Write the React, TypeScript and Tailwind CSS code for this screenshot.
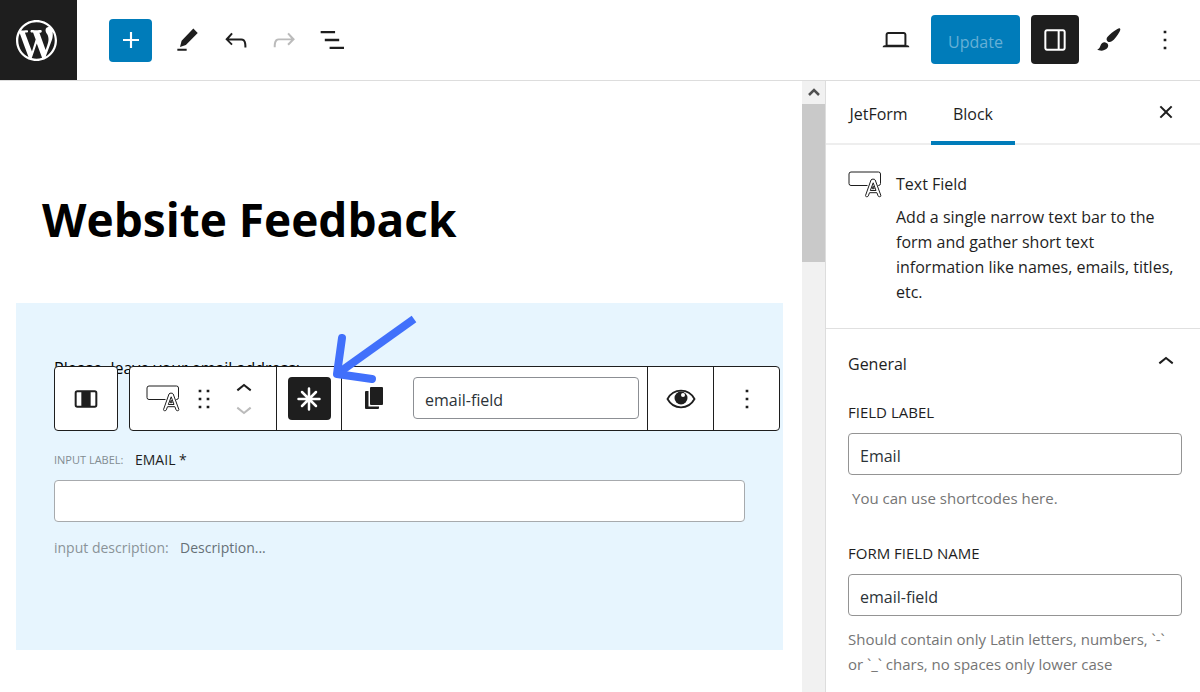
import React from 'react'

const paths = {
    plus: 'M11.2 12.8V18h1.6v-5.2H18v-1.6h-5.2V6h-1.6v5.2H6v1.6z',
    edit: 'm19.300 6.700-3.300-3.300-8.800 9.200-1.200 4.600 4.400-1.400zM11 18.500H4v1.500h7z',
    undo: 'M18.3 11.7c-.6-.6-1.4-.9-2.3-.9H6.7l2.9-3.3-1.1-1-4.5 5L8.5 16l1-1-2.7-2.7H16c.5 0 .9.2 1.3.5 1 1 1 3.4 1 4.5v.3h1.5v-.2c0-1.5 0-4.3-1.5-5.7z',
    redo: 'M15.6 6.5l-1.1 1 2.9 3.3H8c-.9 0-1.7.3-2.3.9-1.4 1.5-1.4 4.2-1.4 5.6v.2h1.5v-.3c0-1.1 0-3.5 1-4.5.3-.3.7-.5 1.3-.5h9.2L14.5 15l1.1 1.1 4.6-4.6-4.6-5z',
    listView: 'M14.300 5.200H3.500v1.800h10.800V5.200zm-4.100 11.800v1.800H21V17H10.200zm7.200-5.900H6.600v1.800h10.800v-1.800z',
    desktop: 'M20.5 16h-.7V8c0-1.1-.9-2-2-2H6.2c-1.1 0-2 .9-2 2v8h-.7c-.8 0-1.5.7-1.5 1.5h20c0-.8-.7-1.5-1.5-1.5zM5.7 8c0-.3.2-.5.5-.5h11.6c.3 0 .5.2.5.5v7.6H5.7V8z',
    drawer: 'M18 4H6c-1.1 0-2 .9-2 2v12c0 1.1.9 2 2 2h12c1.1 0 2-.9 2-2V6c0-1.1-.9-2-2-2zm-4 14.5H6c-.3 0-.5-.2-.5-.5V6c0-.3.2-.5.5-.5h8v13zm4.5-.5c0 .3-.2.5-.5.5h-2.5v-13H18c.3 0 .5.2.5.5v12z',
    brush: 'M20.2 3.4c.5.5.3 1.200-.2 2.200-1.600 3-4 6.200-5.900 7.400-1.200.8-2.400.7-3.300-.1-.8-.8-.8-2 0-3.100 1.600-2 4.800-4.700 7.500-6.100.9-.5 1.500-.7 1.900-.3zM9.300 13.800c1.200.2 2.100 1.200 2.100 2.400 0 2-2.100 3.700-5 3.800-1.400 0-2.600-.3-3.200-.8 1.300-.4 1.800-1.300 2.300-2.700.6-1.900 1.900-3 3.800-2.700z',
    more: 'M13 19h-2v-2h2v2zm0-6h-2v-2h2v2zm0-6h-2V5h2v2z',
    drag: 'M8 7h2V5H8v2zm0 6h2v-2H8v2zm0 6h2v-2H8v2zm6-14v2h2V5h-2zm0 8h2v-2h-2v2zm0 6h2v-2h-2v2z',
    up: 'M6.500 12.400L12 8l5.500 4.400-.9 1.200L12 10l-4.500 3.600-1-1.200z',
    down: 'M17.500 11.600L12 16l-5.500-4.400.9-1.200L12 14l4.500-3.600 1 1.200z',
    close: 'M12 13.060l3.712 3.713 1.061-1.060L13.061 12l3.712-3.712-1.060-1.060L12 10.938 8.288 7.227l-1.061 1.060L10.939 12l-3.712 3.712 1.060 1.061L12 13.061z',
    columns: 'M5.500 5.500h13a2 2 0 0 1 2 2v9a2 2 0 0 1-2 2h-13a2 2 0 0 1-2-2v-9a2 2 0 0 1 2-2zm-.5 1.900v9.200c0 .2.200.4.400.4h3.100V7H5.400c-.2 0-.4.200-.4.400zM15.500 7v10h3.100c.2 0 .4-.2.400-.4V7.400c0-.2-.2-.4-.4-.4z',
}

const Icon = ({name, className = 'size-8'}: { name: keyof typeof paths; className?: string }) => (
    <svg viewBox="0 0 24 24" fill="currentColor" className={className} aria-hidden="true">
        <path d={paths[name]}/>
    </svg>
)

const WordPressLogo = () => (
    <svg viewBox="0 0 20 20" fill="currentColor" className="size-[41px]" aria-hidden="true">
        <path
            d="M20 10c0-5.51-4.49-10-10-10C4.48 0 0 4.49 0 10c0 5.52 4.48 10 10 10 5.51 0 10-4.48 10-10zM7.78 15.37L4.37 6.22c.55-.02 1.17-.08 1.17-.08.5-.06.44-1.13-.06-1.11 0 0-1.45.11-2.37.11-.18 0-.37 0-.58-.01C4.12 2.69 6.87 1.11 10 1.11c2.33 0 4.45.87 6.05 2.34-.68-.11-1.65.39-1.65 1.58 0 .74.45 1.36.9 2.1.35.61.55 1.36.55 2.46 0 1.49-1.4 5-1.4 5l-3.03-8.37c.54-.02.82-.17.82-.17.5-.05.44-1.25-.06-1.22 0 0-1.44.12-2.38.12-.87 0-2.33-.12-2.33-.12-.5-.03-.56 1.2-.06 1.22l.92.08 1.26 3.41zM17.41 10c.24-.64.74-1.87.43-4.25.7 1.29 1.05 2.71 1.05 4.25 0 3.29-1.73 6.24-4.4 7.78.97-2.59 1.94-5.2 2.92-7.78zM6.1 18.09C3.12 16.65 1.11 13.53 1.11 10c0-1.3.23-2.48.72-3.59C3.25 10.3 4.67 14.2 6.1 18.09zm4.03-6.63l2.58 6.98c-.86.29-1.76.45-2.71.45-.79 0-1.57-.11-2.29-.33.81-2.38 1.62-4.74 2.42-7.1z"/>
    </svg>
)

const TextFieldIcon = () => (
    <svg viewBox="0 0 34 28" fill="none" stroke="currentColor" className="h-7 w-[34px] shrink-0" aria-hidden="true">
        <path d="M19.500 14.500H3a2 2 0 0 1-2-2V3a2 2 0 0 1 2-2h27.500a2 2 0 0 1 2 2v9.500a2 2 0 0 1-2 2h-.5"/>
        <path strokeLinejoin="round"
              d="M24 8.200h2.200l1 .8 5.600 15.300c.2.800-.2 1.400-.9 1.400h-.6c-.6 0-1-.3-1.200-.8l-1.200-3.200h-7.400l-1.200 3.200c-.2.500-.6.8-1.200.8h-.6c-.8 0-1.200-.7-.9-1.400L23 9z"/>
        <path strokeLinejoin="round" d="M25.200 11.800l-2.900 7.700h5.700zM25.200 15.200l-1 2.500h2z"/>
    </svg>
)

const AsteriskIcon = () => (
    <svg viewBox="0 0 24 24" fill="none" stroke="currentColor" strokeWidth="2.500" strokeLinecap="round"
         className="size-6" aria-hidden="true">
        <path d="M12 1.500v21M1.500 12h21M5 5l14 14M19 5L5 19"/>
    </svg>
)

const CopyIcon = () => (
    <svg viewBox="0 0 18 22" fill="currentColor" className="h-[22px] w-[18px]" aria-hidden="true">
        <rect x="5" width="13" height="18" rx="1"/>
        <path d="M1 4h2.500v15.500H14V21a1 1 0 0 1-1 1H1a1 1 0 0 1-1-1V5a1 1 0 0 1 1-1z"/>
    </svg>
)

const EyeIcon = () => (
    <svg viewBox="0 0 30 20" className="h-5 w-[30px]" aria-hidden="true">
        <path d="M1.500 10C4.500 4.500 9.500 1.700 15 1.700S25.500 4.500 28.500 10c-3 5.500-8 8.300-13.500 8.300S4.500 15.500 1.500 10z" fill="white"
              stroke="currentColor" strokeWidth="1.800"/>
        <circle cx="15" cy="9" r="6.500" fill="currentColor"/>
        <circle cx="17" cy="6" r="2" fill="white"/>
    </svg>
)

const Header = () => (
    <header className="flex h-[81px] shrink-0 items-stretch justify-between border-b border-[#dddddd]">
        <div className="flex items-center">
            <a href="#" aria-label="View posts"
               className="flex h-20 w-[77px] items-center justify-center bg-[#1e1e1e] pr-1 text-white">
                <WordPressLogo/>
            </a>
            <button aria-label="Add block"
                    className="ml-8 mr-5 flex size-[43px] items-center justify-center rounded-sm bg-[#007cba] text-white">
                <Icon name="plus"/>
            </button>
            <div className="flex items-center gap-4">
                <button aria-label="Tools"><Icon name="edit"/></button>
                <button aria-label="Undo"><Icon name="undo"/></button>
                <button aria-label="Redo" className="text-[#bbbbbb]"><Icon name="redo"/></button>
                <button aria-label="List view"><Icon name="listView"/></button>
            </div>
        </div>
        <div className="flex items-center pb-px pr-[19px]">
            <button aria-label="View" className="mr-[19px]"><Icon name="desktop"/></button>
            <button disabled className="h-[49px] w-[89px] rounded-sm bg-[#007cba] pt-1 text-base text-[#66b0d6]">
                Update
            </button>
            <button aria-label="Settings"
                    className="ml-[11px] flex h-[49px] w-12 items-center justify-center rounded-sm bg-[#1e1e1e] text-white">
                <Icon name="drawer"/>
            </button>
            <button aria-label="Styles" className="ml-3.5"><Icon name="brush"/></button>
            <button aria-label="Options" className="ml-6"><Icon name="more"/></button>
        </div>
    </header>
)

const BlockToolbar = () => (
    <div className="absolute left-[38px] top-[63px] flex h-[65px] w-[726px] gap-[11px]">
        <button aria-label="Select parent block"
                className="flex w-[65px] items-center justify-center rounded-sm border border-[#1e1e1e] bg-white">
            <Icon name="columns"/>
        </button>
        <div className="flex flex-1 divide-x divide-[#1e1e1e] rounded-sm border border-[#1e1e1e] bg-white">
            <div className="flex w-[147px] items-center pl-4">
                <button aria-label="Text Field"><TextFieldIcon/></button>
                <button aria-label="Drag" className="ml-2"><Icon name="drag"/></button>
                <div className="ml-2 flex flex-col pb-1">
                    <button aria-label="Move up" className="flex h-6 items-center"><Icon name="up"/></button>
                    <button aria-label="Move down" className="flex h-4 items-center text-[#bbbbbb]">
                        <Icon name="down"/>
                    </button>
                </div>
            </div>
            <div className="flex w-[65px] items-center justify-center">
                <button aria-label="Required"
                        className="flex size-[43px] items-center justify-center rounded-sm bg-[#1e1e1e] text-white">
                    <AsteriskIcon/>
                </button>
            </div>
            <div className="flex flex-1 items-center pb-0.5 pl-[23px] pr-2">
                <button aria-label="Copy name"><CopyIcon/></button>
                <input aria-label="Field name" defaultValue="email-field"
                       className="ml-[30px] h-[42px] min-w-0 flex-1 rounded-sm border border-[#8c8f94] px-[11px] pt-1 text-base text-[#2c3338]"/>
            </div>
            <button aria-label="Preview" className="flex w-[66px] items-center justify-center"><EyeIcon/></button>
            <button aria-label="More" className="flex w-[65px] items-center justify-center"><Icon name="more"/></button>
        </div>
    </div>
)

const Pointer = () => (
    <svg viewBox="0 0 90 72" fill="none" stroke="#4170fb" strokeWidth="8"
         className="pointer-events-none absolute left-[314px] top-[11px] h-[72px] w-[90px]" aria-hidden="true">
        <path d="M84 5L7 60"/>
        <path strokeLinecap="round" strokeLinejoin="round" d="M12 24L7 60l35 5"/>
    </svg>
)

const Canvas = () => (
    <main className="min-w-0 flex-1 pl-4 pr-[19px] pt-[106px]">
        <h1 className="pl-[26px] text-[46px] font-bold leading-[64px] text-black">Website Feedback</h1>
        <section className="relative mt-[52px] h-[347px] bg-[#e7f5fe] px-[38px] pt-[53px]">
            <p className="text-base leading-6 text-black">Please, leave your email address:</p>
            <div className="mt-[68px] flex items-center leading-6">
                <span className="w-[81px] text-[11px] text-[#828c91]">INPUT LABEL:</span>
                <label htmlFor="preview" className="text-sm leading-6">EMAIL *</label>
            </div>
            <input id="preview" className="mt-2 h-[42px] w-full rounded-sm border border-[#a7aaad] bg-white px-3"/>
            <div className="mt-3.5 flex text-sm leading-6">
                <span className="w-[126px] text-[#8a9398]">input description:</span>
                <span className="text-[#667077]">Description...</span>
            </div>
            <BlockToolbar/>
            <Pointer/>
        </section>
    </main>
)

const fieldClass = 'h-[42px] w-full rounded-sm border border-[#949494] bg-white px-[11px] pt-1 text-base text-[#2c3338]'

const Sidebar = () => (
    <aside className="w-[375px] shrink-0 border-l border-[#dddddd]">
        <div className="flex h-16 items-stretch border-b-2 border-[#eeeeee]">
            <button className="w-[105px] pt-1 text-base">JetForm</button>
            <button className="-mb-0.5 w-[84px] border-b-4 border-[#007cba] pt-1.5 text-base">Block</button>
            <button aria-label="Close" className="ml-auto mr-[18px]"><Icon name="close"/></button>
        </div>
        <div className="flex gap-3.5 border-b border-[#e0e0e0] pb-[23px] pl-[22px] pr-4 pt-[26px]">
            <TextFieldIcon/>
            <div className="pt-px text-base leading-[25px]">
                <h2 className="mb-2">Text Field</h2>
                <p>Add a single narrow text bar to the form and gather short text information like names, emails,
                    titles, etc.</p>
            </div>
        </div>
        <div className="pl-[22px] pr-[18px] pt-[19px]">
            <button className="flex w-full items-start justify-between text-base leading-8">
                General
                <Icon name="up" className="-mt-0.5 size-8"/>
            </button>
            <label htmlFor="field-label" className="mt-5 block text-[15px] leading-6">FIELD LABEL</label>
            <input id="field-label" defaultValue="Email" className={`${fieldClass} mt-[9px]`}/>
            <p className="ml-1 mt-[11px] text-[15px] leading-[25px] text-[#757575]">You can use shortcodes here.</p>
            <label htmlFor="field-name" className="mt-[30px] block text-[15px] leading-6">FORM FIELD NAME</label>
            <input id="field-name" defaultValue="email-field" className={`${fieldClass} mt-[9px]`}/>
            <p className="mt-[11px] text-[15px] leading-[25px] text-[#757575]">
                Should contain only Latin letters, numbers, `-` or `_` chars, no spaces only lower case
            </p>
        </div>
    </aside>
)

const App = () => (
    <div className="flex min-h-screen flex-col bg-white font-['Open_Sans','Noto_Sans',sans-serif] text-[#1e1e1e]">
        <Header/>
        <div className="flex flex-1">
            <Canvas/>
            <div className="flex w-[23px] shrink-0 flex-col bg-[#f1f1f1]">
                <button aria-label="Scroll up"
                        className="flex h-[23px] items-center justify-center pb-0.5 text-[#505050]">
                    <svg viewBox="0 0 12 8" fill="none" stroke="currentColor" strokeWidth="2.500" className="h-2 w-3">
                        <path d="M1 7l5-5 5 5"/>
                    </svg>
                </button>
                <div className="h-[158px] bg-[#c9c9c9]"/>
            </div>
            <Sidebar/>
        </div>
    </div>
)
export default App
